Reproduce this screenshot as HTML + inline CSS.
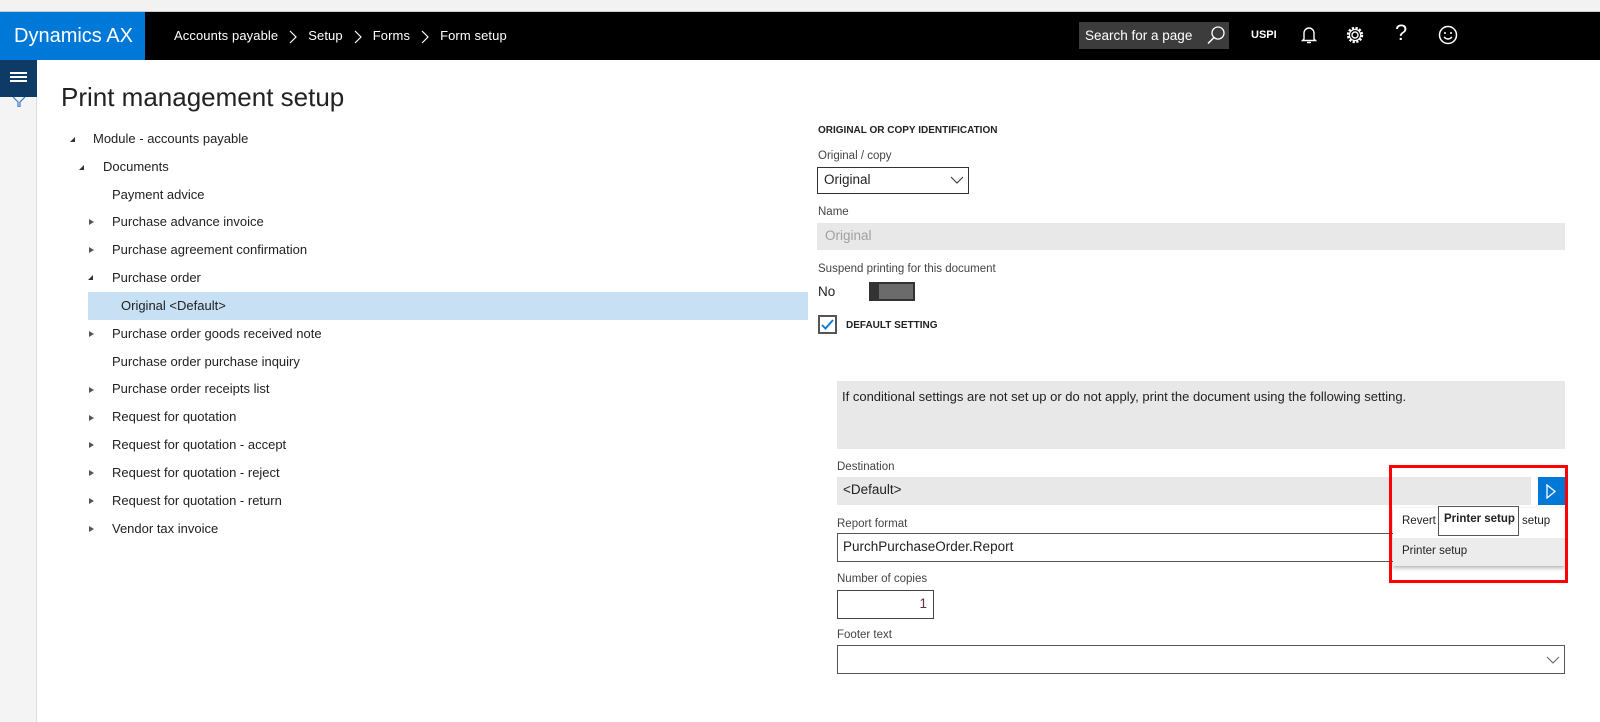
<!DOCTYPE html>
<html><head><meta charset="utf-8"><style>
*{margin:0;padding:0;box-sizing:border-box}
body{width:1600px;height:722px;overflow:hidden;background:#fff;font-family:"Segoe UI","Liberation Sans",sans-serif;color:#222;position:relative}
.a{position:absolute;white-space:nowrap}
.t{font-size:13px;color:#222}
.lbl{font-size:11.5px;color:#444}
.tri{position:absolute;width:0;height:0}
.tr{border-left:5px solid #555;border-top:3.5px solid transparent;border-bottom:3.5px solid transparent}
.td{border-right:5px solid #333;border-top:5px solid transparent}
.chev{display:inline-block;width:14px;height:14px;vertical-align:middle;margin:0 8px}
</style></head><body>
<div class="a" style="left:0;top:0;width:1600px;height:12px;background:#f2f2f2;border-bottom:1px solid #ccc"></div>
<div class="a" style="left:0;top:12px;width:1600px;height:48px;background:#000"></div>
<div class="a" style="left:0;top:12px;width:145px;height:48px;background:#0078d7;color:#fff;font-size:20px;line-height:48px;padding-left:14px">Dynamics AX</div>
<div class="a" style="left:174px;top:12px;line-height:48px;color:#fff;font-size:13px;font-weight:normal;letter-spacing:0.1px">Accounts payable<svg class="chev" viewBox="0 0 14 14"><path d="M4 1l6 6-6 6" fill="none" stroke="#fff" stroke-width="1.2"/></svg>Setup<svg class="chev" viewBox="0 0 14 14"><path d="M4 1l6 6-6 6" fill="none" stroke="#fff" stroke-width="1.2"/></svg>Forms<svg class="chev" viewBox="0 0 14 14"><path d="M4 1l6 6-6 6" fill="none" stroke="#fff" stroke-width="1.2"/></svg>Form setup</div>
<div class="a" style="left:1079px;top:22px;width:150px;height:27px;background:#3c3c3c;color:#fff;font-size:13.5px;line-height:27px;padding-left:6px">Search for a page</div>
<svg class="a" style="left:1206px;top:25px" width="20" height="20" viewBox="0 0 20 20"><circle cx="12" cy="8" r="6" fill="none" stroke="#fff" stroke-width="1.3"/><line x1="8" y1="12.5" x2="2" y2="18.5" stroke="#fff" stroke-width="1.5"/></svg>
<div class="a" style="left:1251px;top:29px;color:#fff;font-size:11px;font-weight:700">USPI</div>
<svg class="a" style="left:1300px;top:25px" width="18" height="20" viewBox="0 0 18 20"><path d="M4 14V8a5 5 0 0 1 10 0v6l1.5 1.5h-13z" fill="none" stroke="#fff" stroke-width="1.4"/><path d="M7 17.5h4" stroke="#fff" stroke-width="1.4"/></svg>
<svg class="a" style="left:1345px;top:25px" width="20" height="20" viewBox="0 0 20 20"><circle cx="10" cy="10" r="3" fill="none" stroke="#fff" stroke-width="1.4"/><circle cx="10" cy="10" r="7" fill="none" stroke="#fff" stroke-width="2.4" stroke-dasharray="2.2 1.5"/><circle cx="10" cy="10" r="5.6" fill="none" stroke="#fff" stroke-width="1.2"/></svg>
<div class="a" style="left:1395px;top:20px;color:#fff;font-size:22px;font-weight:300">?</div>
<svg class="a" style="left:1437px;top:24px" width="22" height="22" viewBox="0 0 22 22"><circle cx="11" cy="11" r="8.5" fill="none" stroke="#fff" stroke-width="1.5"/><circle cx="8" cy="9" r="1" fill="#fff"/><circle cx="14" cy="9" r="1" fill="#fff"/><path d="M7 13q4 4 8 0" fill="none" stroke="#fff" stroke-width="1.4"/></svg>
<div class="a" style="left:0;top:60px;width:37px;height:662px;background:#f4f4f4;border-right:1px solid #ddd"></div>
<div class="a" style="left:0;top:60px;width:37px;height:37px;background:#0e3a66"></div>
<div class="a" style="left:10px;top:72px;width:17px;height:1.5px;background:#fff;box-shadow:0 4px 0 #fff,0 8px 0 #fff"></div>
<svg class="a" style="left:12px;top:97px" width="14" height="10" viewBox="0 0 14 10"><path d="M1 0l5 5v5h2V5l5-5" fill="none" stroke="#3a78c8" stroke-width="1.2"/></svg>
<div class="a" style="left:61px;top:82px;font-size:26px;font-weight:300;color:#222">Print management setup</div>

<div class="a" style="left:88px;top:292px;width:720px;height:28px;background:#c7e0f4"></div>
<div class="tri td" style="left:70px;top:137px"></div><div class="a t" style="left:93px;top:131px">Module - accounts payable</div>
<div class="tri td" style="left:79px;top:165px"></div><div class="a t" style="left:103px;top:159px">Documents</div>
<div class="a t" style="left:112px;top:187px">Payment advice</div>
<div class="tri tr" style="left:89px;top:219px"></div><div class="a t" style="left:112px;top:214px">Purchase advance invoice</div>
<div class="tri tr" style="left:89px;top:247px"></div><div class="a t" style="left:112px;top:242px">Purchase agreement confirmation</div>
<div class="tri td" style="left:88px;top:275px"></div><div class="a t" style="left:112px;top:270px">Purchase order</div>
<div class="a t" style="left:121px;top:298px">Original &lt;Default&gt;</div>
<div class="tri tr" style="left:89px;top:331px"></div><div class="a t" style="left:112px;top:326px">Purchase order goods received note</div>
<div class="a t" style="left:112px;top:354px">Purchase order purchase inquiry</div>
<div class="tri tr" style="left:89px;top:387px"></div><div class="a t" style="left:112px;top:381px">Purchase order receipts list</div>
<div class="tri tr" style="left:89px;top:415px"></div><div class="a t" style="left:112px;top:409px">Request for quotation</div>
<div class="tri tr" style="left:89px;top:442px"></div><div class="a t" style="left:112px;top:437px">Request for quotation - accept</div>
<div class="tri tr" style="left:89px;top:470px"></div><div class="a t" style="left:112px;top:465px">Request for quotation - reject</div>
<div class="tri tr" style="left:89px;top:498px"></div><div class="a t" style="left:112px;top:493px">Request for quotation - return</div>
<div class="tri tr" style="left:89px;top:526px"></div><div class="a t" style="left:112px;top:521px">Vendor tax invoice</div>

<div class="a" style="left:818px;top:125px;font-size:10px;font-weight:700;color:#222">ORIGINAL OR COPY IDENTIFICATION</div>
<div class="a lbl" style="left:818px;top:150px">Original / copy</div>
<div class="a" style="left:817px;top:167px;width:152px;height:27px;border:1px solid #333;font-size:13.5px;padding:4px 6px">Original</div>
<svg class="a" style="left:950px;top:176px" width="14" height="9" viewBox="0 0 14 9"><path d="M1 1l6 6 6-6" fill="none" stroke="#444" stroke-width="1.2"/></svg>
<div class="a lbl" style="left:818px;top:206px">Name</div>
<div class="a" style="left:817px;top:223px;width:748px;height:27px;background:#e8e8e8;font-size:13.5px;color:#a0a0a0;padding:5px 8px">Original</div>
<div class="a lbl" style="left:818px;top:263px">Suspend printing for this document</div>
<div class="a" style="left:818px;top:284px;font-size:13.5px">No</div>
<div class="a" style="left:869px;top:282px;width:46px;height:19px;background:#6b6b6b;border:2px solid #333"><div style="position:absolute;left:0;top:0;width:8px;height:15px;background:#333"></div></div>
<div class="a" style="left:818px;top:315px;width:19px;height:19px;border:2px solid #555"></div>
<svg class="a" style="left:820px;top:317px" width="15" height="15" viewBox="0 0 15 15"><path d="M2 8l3.5 3.5L13 3" fill="none" stroke="#0078d7" stroke-width="1.8"/></svg>
<div class="a" style="left:846px;top:320px;font-size:10px;font-weight:700;color:#222">DEFAULT SETTING</div>

<div class="a" style="left:837px;top:381px;width:728px;height:68px;background:#e8e8e8;font-size:13px;padding:8px 5px">If conditional settings are not set up or do not apply, print the document using the following setting.</div>
<div class="a lbl" style="left:837px;top:461px">Destination</div>
<div class="a" style="left:837px;top:477px;width:694px;height:28px;background:#e8e8e8;font-size:13.5px;padding:5px 6px">&lt;Default&gt;</div>
<div class="a" style="left:1538px;top:477px;width:27px;height:28px;background:#0078d7"></div>
<svg class="a" style="left:1545px;top:484px" width="12" height="15" viewBox="0 0 12 15"><path d="M2 1l8 6.5L2 14z" fill="none" stroke="#fff" stroke-width="1.3"/></svg>
<div class="a lbl" style="left:837px;top:518px">Report format</div>
<div class="a" style="left:837px;top:533px;width:560px;height:29px;border:1px solid #555;border-right:none;font-size:13.5px;padding:5px 5px">PurchPurchaseOrder.Report</div>
<div class="a lbl" style="left:837px;top:573px">Number of copies</div>
<div class="a" style="left:837px;top:590px;width:97px;height:29px;border:1px solid #444;font-size:13.5px;text-align:right;padding:5px 6px;color:#6b2a4a">1</div>
<div class="a lbl" style="left:837px;top:629px">Footer text</div>
<div class="a" style="left:837px;top:645px;width:728px;height:29px;border:1px solid #555"></div>
<svg class="a" style="left:1546px;top:656px" width="14" height="9" viewBox="0 0 14 9"><path d="M1 1l6 6 6-6" fill="none" stroke="#666" stroke-width="1.1"/></svg>

<div class="a" style="left:1393px;top:508px;width:172px;height:58px;background:#fff;box-shadow:0 2px 4px rgba(0,0,0,.3)"></div>
<div class="a" style="left:1393px;top:538px;width:172px;height:28px;background:#ececec"></div>
<div class="a" style="left:1402px;top:515px;font-size:11.5px">Revert t</div>
<div class="a" style="left:1522px;top:515px;font-size:11.5px">setup</div>
<div class="a" style="left:1438px;top:506px;width:81px;height:30px;background:#fff;border:1.5px solid #555;font-size:11.5px;font-weight:600;padding:6px 5px">Printer setup</div>
<div class="a" style="left:1402px;top:545px;font-size:11.5px">Printer setup</div>
<div class="a" style="left:1389px;top:465px;width:179px;height:118px;border:3px solid #ff0000"></div>
</body></html>
